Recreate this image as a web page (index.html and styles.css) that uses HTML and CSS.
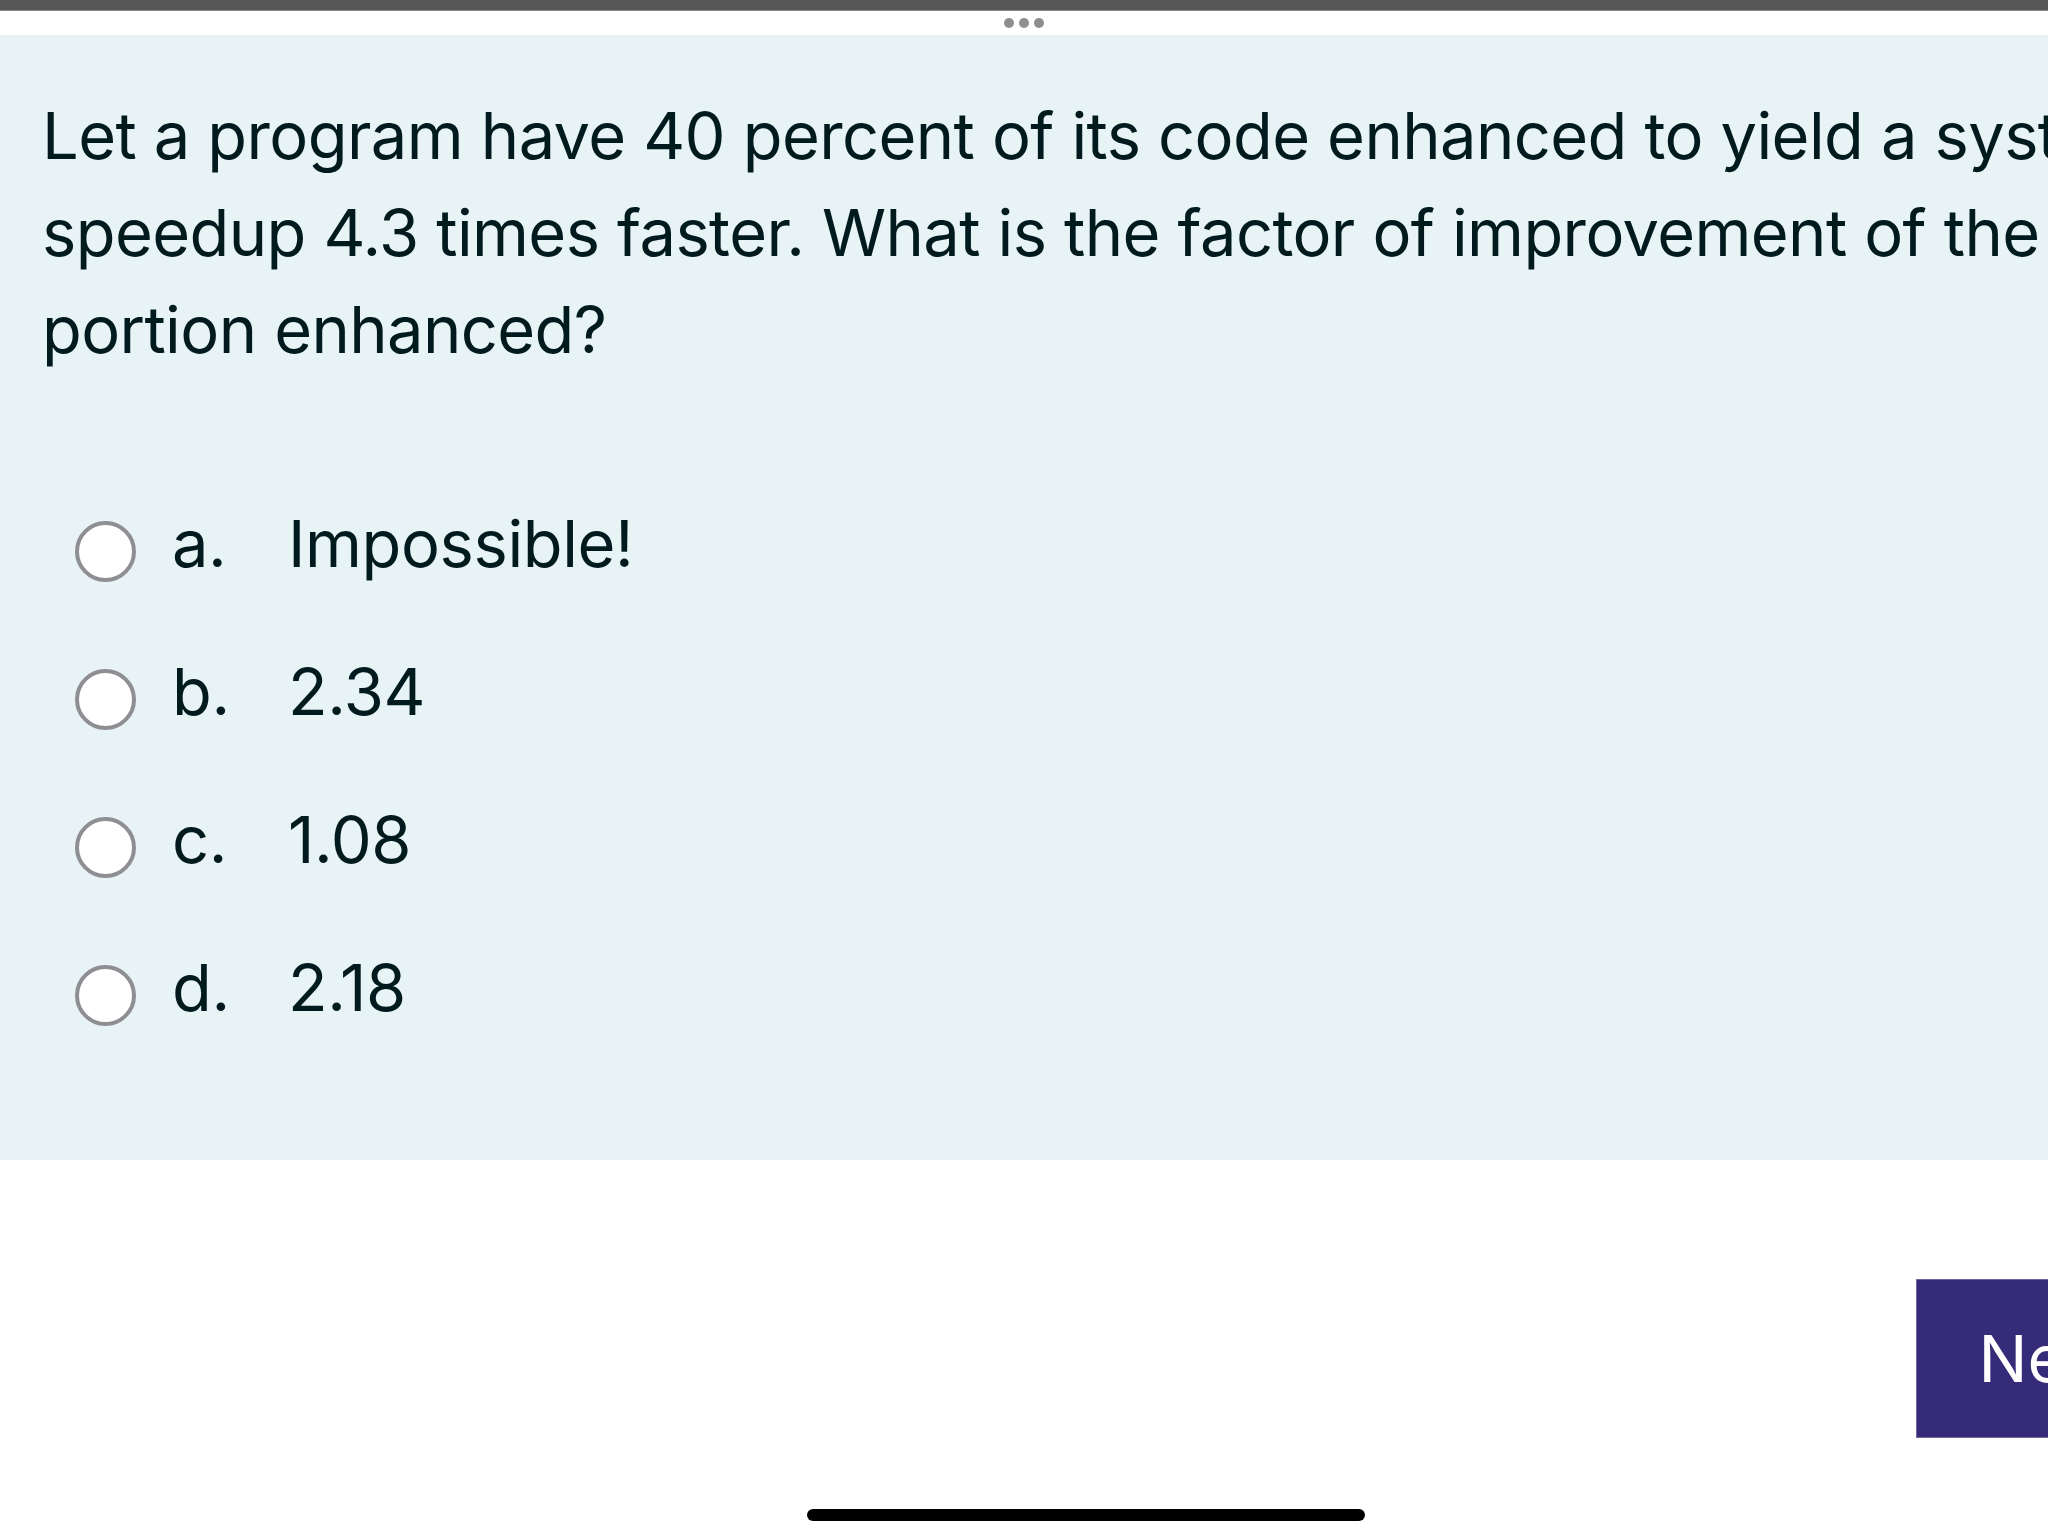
FILE: index.html
```html
<!DOCTYPE html>
<html lang="en">
<head>
<meta charset="UTF-8" />
<meta name="viewport" content="width=device-width, initial-scale=1.0"/>
<title>Quiz - Question</title>
<link rel="stylesheet" href="styles.css"></head><body>

<div class="topbar"></div>
<div class="grabber">
<span class="dot"></span>
<span class="dot"></span>
<span class="dot"></span>
</div>

<div class="page">
<form id="quizForm">
<div class="formulation">
<p class="qtext">Let a program have 40 percent of its code enhanced to yield a system speedup 4.3 times faster. What is the factor of improvement of the portion enhanced?</p>
<div class="answer">
<label class="option">
<input type="radio" name="answer" value="0" />
<span class="letter">a.</span>
<span class="text">Impossible!</span>
</label>
<label class="option">
<input type="radio" name="answer" value="1" />
<span class="letter">b.</span>
<span class="text">2.34</span>
</label>
<label class="option">
<input type="radio" name="answer" value="2" />
<span class="letter">c.</span>
<span class="text">1.08</span>
</label>
<label class="option">
<input type="radio" name="answer" value="3" />
<span class="letter">d.</span>
<span class="text">2.18</span>
</label>
</div>
</div>
<div class="footer">
<button type="submit" class="btn-next">Next page</button>
</div>
</form>
</div>

<div class="home-indicator"></div>

</body></html>
```

FILE: styles.css
```css
body {
  margin: 0;
  overflow: hidden;
  background: #fff;
  font-family: Inter, "Noto Sans", sans-serif;
  color: #001a1e;
}

.topbar {
  height: 10px;
  background: #575757;
  border-bottom: 1px solid #8a8a8a;
}

.grabber {
  height: 24px;
  display: flex;
  justify-content: center;
  align-items: center;
  gap: 5px;
}

.dot {
  width: 10px;
  height: 10px;
  border-radius: 50%;
  background: #8e8e8e;
}

.page {
  width: 2400px;
}

.formulation {
  background: #e7f3f5;
  padding: 52px 42px 98px 42px;
}

.qtext {
  margin: 0;
  max-width: 2140px;
  font-size: 65px;
  line-height: 97px;
  letter-spacing: -0.6px;
}

.answer {
  margin-top: 92px;
}

.option {
  display: flex;
  align-items: center;
  height: 148px;
  font-size: 65px;
  line-height: 148px;
  letter-spacing: -0.4px;
  cursor: pointer;
}

.option input[type="radio"] {
  appearance: none;
  flex: none;
  box-sizing: border-box;
  width: 61px;
  height: 61px;
  margin: 14px 36px 0 33px;
  border: 4.5px solid #8e8e93;
  border-radius: 50%;
  background: #fff;
}

.option input[type="radio"]:checked {
  border-color: #352b78;
  box-shadow: inset 0 0 0 10px #fff;
  background: #352b78;
}

.letter {
  width: 116px;
  flex: none;
}

.footer {
  display: flex;
  justify-content: flex-end;
  padding: 119px 42px 0;
}

.btn-next {
  height: 159px;
  padding: 0 62px;
  background: #352b78;
  color: #fff;
  border: 1px solid #6f68a0;
  font-family: Inter, "Noto Sans", sans-serif;
  font-size: 65px;
  cursor: pointer;
}

.home-indicator {
  position: fixed;
  left: 807px;
  bottom: 15px;
  width: 558px;
  height: 12px;
  border-radius: 6px;
  background: #000;
}
```
